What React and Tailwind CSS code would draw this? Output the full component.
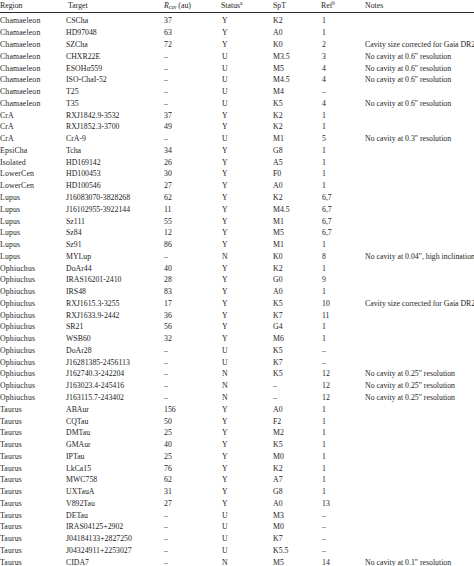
const rows = [
  ["Chamaeleon", "CSCha", "37", "Y", "K2", "1", ""],
  ["Chamaeleon", "HD97048", "63", "Y", "A0", "1", ""],
  ["Chamaeleon", "SZCha", "72", "Y", "K0", "2", "Cavity size corrected for Gaia DR2"],
  ["Chamaeleon", "CHXR22E", "–", "U", "M3.5", "3", "No cavity at 0.6\" resolution"],
  ["Chamaeleon", "ESOHA559", "–", "U", "M5", "4", "No cavity at 0.6\" resolution"],
  ["Chamaeleon", "ISO-ChaI-52", "–", "U", "M4.5", "4", "No cavity at 0.6\" resolution"],
  ["Chamaeleon", "T25", "–", "U", "M4", "–", ""],
  ["Chamaeleon", "T35", "–", "U", "K5", "4", "No cavity at 0.6\" resolution"],
  ["CrA", "RXJ1842.9-3532", "37", "Y", "K2", "1", ""],
  ["CrA", "RXJ1852.3-3700", "49", "Y", "K2", "1", ""],
  ["CrA", "CrA-9", "–", "U", "M1", "5", "No cavity at 0.3\" resolution"],
  ["EpsiCha", "Tcha", "34", "Y", "G8", "1", ""],
  ["Isolated", "HD169142", "26", "Y", "A5", "1", ""],
  ["LowerCen", "HD100453", "30", "Y", "F0", "1", ""],
  ["LowerCen", "HD100546", "27", "Y", "A0", "1", ""],
  ["Lupus", "J16083070-3828268", "62", "Y", "K2", "6,7", ""],
  ["Lupus", "J16102955-3922144", "11", "Y", "M4.5", "6,7", ""],
  ["Lupus", "Sz111", "55", "Y", "M1", "6,7", ""],
  ["Lupus", "Sz84", "12", "Y", "M5", "6,7", ""],
  ["Lupus", "Sz91", "86", "Y", "M1", "1", ""],
  ["Lupus", "MYLup", "–", "N", "K0", "8", "No cavity at 0.04\", high inclination"],
  ["Ophiuchus", "DoAr44", "40", "Y", "K2", "1", ""],
  ["Ophiuchus", "IRAS16201-2410", "28", "Y", "G0", "9", ""],
  ["Ophiuchus", "IRS48", "83", "Y", "A0", "1", ""],
  ["Ophiuchus", "RXJ1615.3-3255", "17", "Y", "K5", "10", "Cavity size corrected for Gaia DR2"],
  ["Ophiuchus", "RXJ1633.9-2442", "36", "Y", "K7", "11", ""],
  ["Ophiuchus", "SR21", "56", "Y", "G4", "1", ""],
  ["Ophiuchus", "WSB60", "32", "Y", "M6", "1", ""],
  ["Ophiuchus", "DoAr28", "–", "U", "K5", "–", ""],
  ["Ophiuchus", "J16281385-2456113", "–", "U", "K7", "–", ""],
  ["Ophiuchus", "J162740.3-242204", "–", "N", "K5", "12", "No cavity at 0.25\" resolution"],
  ["Ophiuchus", "J163023.4-245416", "–", "N", "–", "12", "No cavity at 0.25\" resolution"],
  ["Ophiuchus", "J163115.7-243402", "–", "N", "–", "12", "No cavity at 0.25\" resolution"],
  ["Taurus", "ABAur", "156", "Y", "A0", "1", ""],
  ["Taurus", "CQTau", "50", "Y", "F2", "1", ""],
  ["Taurus", "DMTau", "25", "Y", "M2", "1", ""],
  ["Taurus", "GMAur", "40", "Y", "K5", "1", ""],
  ["Taurus", "IPTau", "25", "Y", "M0", "1", ""],
  ["Taurus", "LkCa15", "76", "Y", "K2", "1", ""],
  ["Taurus", "MWC758", "62", "Y", "A7", "1", ""],
  ["Taurus", "UXTauA", "31", "Y", "G8", "1", ""],
  ["Taurus", "V892Tau", "27", "Y", "A0", "13", ""],
  ["Taurus", "DETau", "–", "U", "M3", "–", ""],
  ["Taurus", "IRAS04125+2902", "–", "U", "M0", "–", ""],
  ["Taurus", "J04184133+2827250", "–", "U", "K7", "–", ""],
  ["Taurus", "J04324911+2253027", "–", "U", "K5.5", "–", ""],
  ["Taurus", "CIDA7", "–", "N", "M5", "14", "No cavity at 0.1\" resolution"],
];

const cols = "grid grid-cols-[66px_98px_57px_52px_48px_44px_1fr]";

const Target = ({ name }) => {
  if (name === "ESOHA559") {
    return (
      <span>
        ESOH<span className="italic">α</span>559
      </span>
    );
  }
  return <span>{name}</span>;
};

export default function App() {
  return (
    <div
      className="w-[474px] h-[566px] overflow-hidden bg-white text-[#1c1c1c] text-[7.8px] whitespace-nowrap"
      style={{ fontFamily: '"Liberation Serif", "Times New Roman", serif' }}
    >
      <div className={`${cols} h-[13px] items-center border-b-[1.5px] border-[#2a2a2a] leading-none`}>
        <span>Region</span>
        <span className="pl-[2px]">Target</span>
        <span>
          <span className="italic">R</span>
          <sub className="text-[5.5px]">cav</sub> (au)
        </span>
        <span>
          Status<sup className="text-[5.5px]">a</sup>
        </span>
        <span>SpT</span>
        <span>
          Ref<sup className="text-[5.5px]">b</sup>
        </span>
        <span>Notes</span>
      </div>

      <div className="pt-[2.5px]">
        {rows.map((r, i) => (
          <div key={i} className={`${cols} h-[11.77px] items-center leading-none`}>
            <span className="tracking-[0.15px]">{r[0]}</span>
            <Target name={r[1]} />
            <span>{r[2]}</span>
            <span className="pl-[1px]">{r[3]}</span>
            <span>{r[4]}</span>
            <span className="pl-[1px]">{r[5]}</span>
            <span>{r[6]}</span>
          </div>
        ))}
      </div>
    </div>
  );
}
